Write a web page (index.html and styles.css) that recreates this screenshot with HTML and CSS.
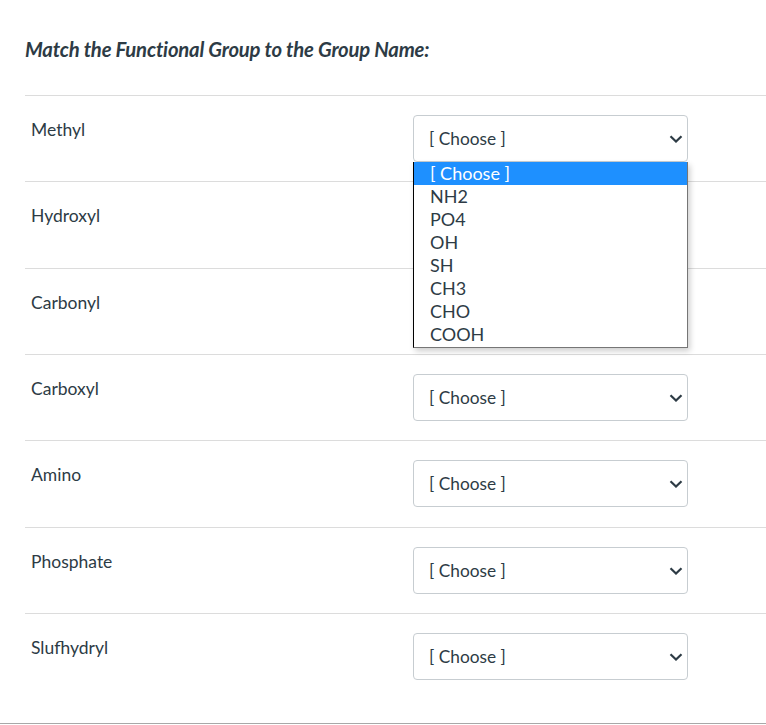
FILE: index.html
```html
<!DOCTYPE html>
<html>
<head>
<meta charset="utf-8">
<link rel="stylesheet" href="styles.css">
</head>
<body>
<div class="page">
  <h2 class="title">Match the Functional Group to the Group Name:</h2>
  <div class="rows">
    <div class="row">
      <div class="label">Methyl</div>
      <div class="field">
        <div class="select"><span>[ Choose ]</span><svg class="chev" width="14" height="8" viewBox="0 0 14 8"><path d="M1.5 1.2 L7 6.5 L12.5 1.2" fill="none" stroke="#2d3b45" stroke-width="2.2"/></svg></div>
        <ul class="listbox">
          <li class="opt selected">[ Choose ]</li>
          <li class="opt">NH2</li>
          <li class="opt">PO4</li>
          <li class="opt">OH</li>
          <li class="opt">SH</li>
          <li class="opt">CH3</li>
          <li class="opt">CHO</li>
          <li class="opt">COOH</li>
        </ul>
      </div>
    </div>
    <div class="row">
      <div class="label">Hydroxyl</div>
      <div class="field"><div class="select"><span>[ Choose ]</span><svg class="chev" width="14" height="8" viewBox="0 0 14 8"><path d="M1.5 1.2 L7 6.5 L12.5 1.2" fill="none" stroke="#2d3b45" stroke-width="2.2"/></svg></div></div>
    </div>
    <div class="row">
      <div class="label">Carbonyl</div>
      <div class="field"><div class="select"><span>[ Choose ]</span><svg class="chev" width="14" height="8" viewBox="0 0 14 8"><path d="M1.5 1.2 L7 6.5 L12.5 1.2" fill="none" stroke="#2d3b45" stroke-width="2.2"/></svg></div></div>
    </div>
    <div class="row">
      <div class="label">Carboxyl</div>
      <div class="field"><div class="select"><span>[ Choose ]</span><svg class="chev" width="14" height="8" viewBox="0 0 14 8"><path d="M1.5 1.2 L7 6.5 L12.5 1.2" fill="none" stroke="#2d3b45" stroke-width="2.2"/></svg></div></div>
    </div>
    <div class="row">
      <div class="label">Amino</div>
      <div class="field"><div class="select"><span>[ Choose ]</span><svg class="chev" width="14" height="8" viewBox="0 0 14 8"><path d="M1.5 1.2 L7 6.5 L12.5 1.2" fill="none" stroke="#2d3b45" stroke-width="2.2"/></svg></div></div>
    </div>
    <div class="row">
      <div class="label">Phosphate</div>
      <div class="field"><div class="select"><span>[ Choose ]</span><svg class="chev" width="14" height="8" viewBox="0 0 14 8"><path d="M1.5 1.2 L7 6.5 L12.5 1.2" fill="none" stroke="#2d3b45" stroke-width="2.2"/></svg></div></div>
    </div>
    <div class="row last">
      <div class="label">Slufhydryl</div>
      <div class="field"><div class="select"><span>[ Choose ]</span><svg class="chev" width="14" height="8" viewBox="0 0 14 8"><path d="M1.5 1.2 L7 6.5 L12.5 1.2" fill="none" stroke="#2d3b45" stroke-width="2.2"/></svg></div></div>
    </div>
  </div>
</div>
</body>
</html>
```
FILE: styles.css
```css
html, body {
  margin: 0;
  padding: 0;
  background: #fff;
}
body {
  font-family: Lato, "Noto Sans", sans-serif;
  color: #2d3b45;
  width: 766px;
  height: 725px;
  overflow: hidden;
}
.page {
  border-bottom: 1px solid #a8a8a8;
}
.title {
  margin: 0;
  padding: 36px 0 0 25px;
  height: 95px;
  box-sizing: border-box;
  font-size: 20.3px;
  line-height: 26px;
  font-weight: 700;
  font-style: italic;
  letter-spacing: -0.2px;
}
.rows {
  margin-left: 25px;
  padding-bottom: 43px;
}
.row {
  border-top: 1px solid #dcdcdc;
  display: grid;
  grid-template-columns: 388px 275px;
  padding: 19px 0 0 0;
  height: 86.33px;
  box-sizing: border-box;
}
.row.last {
  height: 67px;
}
.label {
  padding-left: 6px;
  padding-top: 4px;
  font-size: 17.5px;
  line-height: 22px;
}
.field {
  position: relative;
}
.select {
  height: 47px;
  box-sizing: border-box;
  border: 1px solid #c7cdd1;
  border-radius: 4px;
  display: flex;
  align-items: center;
  justify-content: space-between;
  padding: 0 4px 1px 15px;
  font-size: 17.3px;
  background: #fff;
}
.select span {
  padding-top: 1px;
}
.chev {
  margin-top: 2px;
}
.listbox {
  position: absolute;
  top: 47px;
  left: 0;
  width: 275px;
  height: 186px;
  box-sizing: border-box;
  margin: 0;
  padding: 0;
  list-style: none;
  background: #fff;
  border: 1px solid #767676;
  border-left-color: #000;
  border-top: none;
  box-shadow: 2px 3px 6px rgba(0,0,0,0.2);
  z-index: 5;
}
.opt {
  height: 23px;
  line-height: 23px;
  padding-left: 16px;
  font-size: 18px;
  color: #2d3b45;
}
.opt.selected {
  background: #1e90ff;
  color: #fff;
}
```
